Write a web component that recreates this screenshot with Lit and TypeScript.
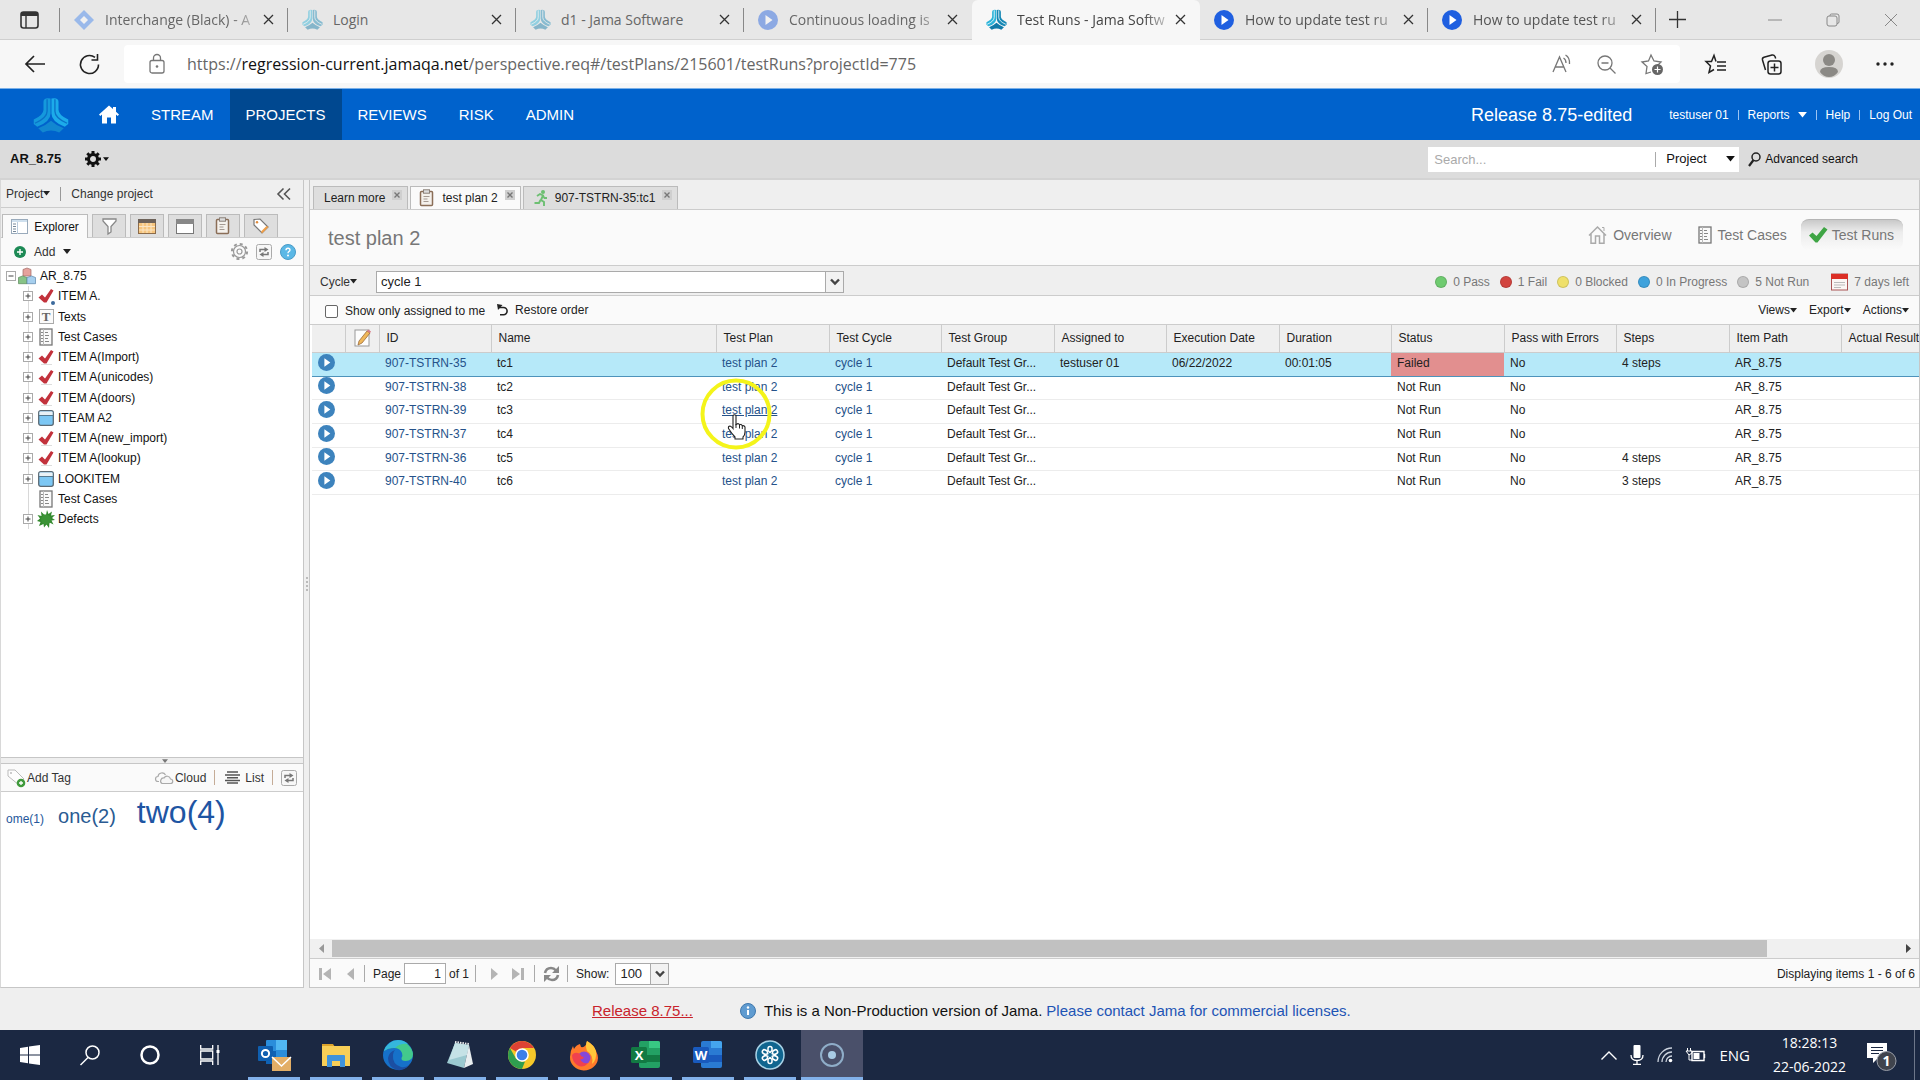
import { LitElement, html, svg, css, nothing, TemplateResult } from "lit";
import { customElement } from "lit/decorators.js";
import { classMap } from "lit/directives/class-map.js";

const base = css`
  * { box-sizing: border-box; }
  button, input, select { font: inherit; color: inherit; margin: 0; padding: 0; border: 0; background: none; border-radius: 0; outline: 0; }
  button { display: inline-flex; align-items: center; white-space: nowrap; cursor: pointer; }
  a { text-decoration: none; color: inherit; }
  select { appearance: none; }
  svg { display: block; flex: none; overflow: visible; }
  .grow { flex: 1; min-width: 0; }
  .row { display: flex; align-items: center; }
`;

const icon = (w: number, h: number, box: string, body: unknown) =>
  html`<svg width=${w} height=${h} viewBox=${box} fill="none" aria-hidden="true">${body}</svg>`;

const caret = (w = 8, color = "#222") =>
  icon(w, w / 2 + 1, "0 0 8 5", svg`<path d="M0 0h8L4 5z" fill=${color}/>`);

const chevron = () =>
  icon(10, 8, "0 0 10 8", svg`<path d="M1 1.5l4 4 4-4" stroke="#444" stroke-width="2.4"/>`);

const jama = (size: number, a: string, b: string, c: string, line: string) =>
  icon(size, size, "0 0 24 24", svg`
    <path d="M11.700 1Q7 .2 7 3.200V8.500Q7 12 .5 15V18L2.800 19.800Q11.700 16.500 11.700 11z" fill=${a}/>
    <path d="M12.300 1Q17 .2 17 3.200V8.500Q17 12 23.500 15V18L21.200 19.800Q12.300 16.500 12.300 11z" fill=${b}/>
    <path d="M3.500 20.800Q8.500 19 12 15.800Q15.500 19 20.500 20.800L17.500 23.700Q12 21 6.500 23.700z" fill=${c}/>
    <path d="M9.400 1.500V9.500Q9.400 14 1.300 17.500M14.600 1.500V9.500Q14.600 14 22.700 17.500" stroke=${line} stroke-width=".9"/>`);

const play = (size: number, color: string) =>
  icon(size, size, "0 0 20 20", svg`<circle cx="10" cy="10" r="10" fill=${color}/><path d="M7.500 5l7 5-7 5z" fill="#fff"/>`);

const clipboard = () => icon(16, 18, "0 0 16 18", svg`
  <rect x="1.500" y="2.500" width="12" height="14" rx="1" fill="#f4f1ec" stroke="#8a6e57" stroke-width="1.500"/>
  <rect x="4.500" y=".8" width="6" height="3.400" fill="#ddd" stroke="#8a8078"/>
  <path d="M4.500 7.500h6M4.500 10h4M4.500 12.500h5" stroke="#a59a93"/>`);

const doc = () => icon(14, 18, "0 0 14 18", svg`
  <rect x="1" y="1" width="12" height="16" fill="#fafafa" stroke="#777" stroke-width="1.300"/>
  <path d="M4.500 1v16" stroke="#bbb"/><path d="M2 4.500h2M2 7.500h2M2 10.500h2M2 13.500h2M6 4.500h3M6 7.500h4M6 10.500h3M6 13.500h4" stroke="#888"/>`);

const refreshBox = () => icon(16, 16, "0 0 16 16", svg`
  <rect x=".5" y=".5" width="15" height="15" rx="2" fill="#f7f7f7" stroke="#aaa"/>
  <path d="M4 8V5.500h5M12 8v2.500H7" stroke="#777" stroke-width="1.500"/><path d="M8.500 3l4 2.500-4 2.500zM7.500 8l-4 2.500 4 2.500z" fill="#777"/>`);

@customElement("browser-bar")
class BrowserBar extends LitElement {
  static styles = [base, css`
    :host { display: block; font: 14px/20px "Open Sans", "Noto Sans", sans-serif; color: #666; }
    .strip { height: 40px; background: #e7e7e7; border-bottom: 1px solid #cfcfcf; }
    .menu { width: 60px; height: 24px; padding-left: 20px; border-right: 1px solid #888; }
    .tab { width: 228px; height: 40px; padding: 0 14px; border-radius: 6px 6px 0 0; position: relative; }
    .tab.sep::after { content: ""; position: absolute; right: 0; top: 8px; height: 24px; width: 1px; background: #888; }
    .tab.active { background: #f7f7f7; color: #444; }
    .tab.live { color: #555; }
    .fav { width: 20px; margin-right: 11px; }
    .dim { opacity: .45; }
    .title { flex: 1; white-space: nowrap; }
    .title.fade { -webkit-mask-image: linear-gradient(90deg, #000 80%, transparent); mask-image: linear-gradient(90deg, #000 80%, transparent); }
    .new { padding-left: 13px; }
    .win { margin-right: 22px; gap: 44px; }
    .bar { height: 48px; background: #f7f7f7; padding: 0 26px 0 24px; }
    .back { width: 55px; } .reload { width: 45px; }
    .url { height: 38px; background: #fff; border-radius: 4px; flex: 1; padding: 0 17px 0 25px; gap: 25px; }
    .url label { display: flex; align-items: center; gap: 22px; flex: 1; font-size: 16px; white-space: nowrap; }
    .host { color: #111; }
    .tools { gap: 35px; margin-left: 25px; }
    .avatar { margin: 0 -2px; }
  `];

  private tab(title: string, fav: TemplateResult, cls: Record<string, boolean>, dim = false) {
    return html`<div class="row tab ${classMap(cls)}">
      <span class="fav ${dim ? "dim" : ""}">${fav}</span><span class="title ${title.length > 19 ? "fade" : ""}">${title}</span>
      <button aria-label="Close ${title}">${icon(11, 11, "0 0 11 11", svg`<path d="M1 1l9 9M10 1l-9 9" stroke="#333" stroke-width="1.300"/>`)}</button>
    </div>`;
  }

  render() {
    const j = () => jama(21, "#2bb3d9", "#1688b5", "#107aa8", "#fff");
    const p = () => play(20, "#1f5fe0");
    const g = "#777", k = "#222";
    return html`
      <div class="row strip">
        <button class="menu" aria-label="Tab actions">${icon(19, 18, "0 0 19 18", svg`<rect x="1" y="1" width="17" height="16" rx="2.500" stroke="#333" stroke-width="1.600"/><path d="M1 3a2 2 0 0 1 2-2h13a2 2 0 0 1 2 2v2H1z" fill="#333"/><path d="M6 5v12" stroke="#333" stroke-width="1.400"/>`)}</button>
        ${this.tab("Interchange (Black) - A", icon(20, 20, "0 0 20 20", svg`<path d="M10 0l10 10-10 10L0 10z" fill="#3f83ee"/><path d="M10 6l4 4-4 4-4-4z" fill="#fff"/>`), { sep: true }, true)}
        ${this.tab("Login", j(), { sep: true }, true)}
        ${this.tab("d1 - Jama Software", j(), { sep: true }, true)}
        ${this.tab("Continuous loading is", p(), {}, true)}
        ${this.tab("Test Runs - Jama Softw", j(), { active: true })}
        ${this.tab("How to update test ru", p(), { sep: true, live: true })}
        ${this.tab("How to update test ru", p(), { sep: true, live: true })}
        <button class="new" aria-label="New tab">${icon(17, 17, "0 0 17 17", svg`<path d="M8.500 0v17M0 8.500h17" stroke="#333" stroke-width="1.300"/>`)}</button>
        <span class="grow"></span>
        <div class="row win">
          <button aria-label="Minimize">${icon(14, 14, "0 0 14 14", svg`<path d="M0 7h14" stroke="#888"/>`)}</button>
          <button aria-label="Restore">${icon(14, 14, "0 0 14 14", svg`<rect x="1" y="3" width="10" height="10" rx="2" stroke="#888"/><path d="M4 3V2.500Q4 1 5.500 1H11q2 0 2 2v6q0 1.500-2 1.500" stroke="#888"/>`)}</button>
          <button aria-label="Close window">${icon(14, 14, "0 0 14 14", svg`<path d="M1 1l12 12M13 1L1 13" stroke="#888"/>`)}</button>
        </div>
      </div>
      <div class="row bar">
        <button class="back" aria-label="Back">${icon(22, 18, "0 0 22 18", svg`<path d="M21 9H2M10 1L2 9l8 8" stroke=${k} stroke-width="1.700"/>`)}</button>
        <button class="reload" aria-label="Reload">${icon(21, 21, "0 0 21 21", svg`<path d="M19.500 10.500a9 9 0 1 1-3.500-7.100M18.500 0v6h-6" stroke=${k} stroke-width="1.600"/>`)}</button>
        <div class="row url">
          <label>${icon(16, 20, "0 0 16 20", svg`<rect x="1" y="6.500" width="14" height="12.500" rx="2" stroke=${g} stroke-width="1.300"/><path d="M4.500 6.500V4a3.500 3.500 0 0 1 7 0v2.500" stroke=${g} stroke-width="1.300"/><circle cx="8" cy="12.500" r="1.300" fill=${g}/>`)}
            <a href="#url">https://<span class="host">regression-current.jamaqa.net</span>/perspective.req#/testPlans/215601/testRuns?projectId=775</a></label>
          <button aria-label="Read aloud">${icon(20, 18, "0 0 20 18", svg`<path d="M1 17L7.500 2 14 17M3.500 12h8M11.500 3q2.500 1.500 2.500 5M13.500 0q4.500 2.500 4 9" stroke=${g} stroke-width="1.300"/>`)}</button>
          <button aria-label="Zoom out">${icon(19, 19, "0 0 19 19", svg`<circle cx="8" cy="8" r="7" stroke=${g} stroke-width="1.300"/><path d="M13 13l5.500 5.500M4.500 8h7" stroke=${g} stroke-width="1.300"/>`)}</button>
          <button aria-label="Add favorite">${icon(22, 21, "0 0 22 21", svg`<path d="M10 18l-5 1.500 1-7L1 8l6.500-1L10 1l3 6 7 1-3 3" stroke=${g} stroke-width="1.300"/><circle cx="16.500" cy="15.500" r="5.500" fill="#666"/><path d="M16.500 12.500v6M13.500 15.500h6" stroke="#fff" stroke-width="1.200"/>`)}</button>
        </div>
        <div class="row tools">
          <button aria-label="Favorites">${icon(21, 20, "0 0 21 20", svg`<path d="M11 7.500L9 1.500l-2.500 6H1l4.500 4.500-1.500 6.500 5-3M12 8h9M12 12h9M12 16h9" stroke=${k} stroke-width="1.500"/>`)}</button>
          <button aria-label="Collections">${icon(21, 21, "0 0 21 21", svg`<rect x="7" y="7" width="13" height="13" rx="2.500" stroke=${k} stroke-width="1.500"/><path d="M13.500 9.500v8M9.500 13.500h8M4.500 16L1.500 6Q1 4 3 3.300L11 1q2-.500 3 1.500l.7 2" stroke=${k} stroke-width="1.500"/>`)}</button>
          <button class="avatar" aria-label="Profile">${icon(28, 28, "0 0 28 28", svg`<circle cx="14" cy="14" r="14" fill="#d6d4d1"/><circle cx="14" cy="10" r="6" fill="#8b8985"/><path d="M5 22q0-5 9-5t9 5q-3.500 5-9 5t-9-5z" fill="#8b8985"/>`)}</button>
          <button aria-label="More">${icon(18, 4, "0 0 18 4", svg`<circle cx="2" cy="2" r="1.700" fill=${k}/><circle cx="9" cy="2" r="1.700" fill=${k}/><circle cx="16" cy="2" r="1.700" fill=${k}/>`)}</button>
        </div>
      </div>`;
  }
}

@customElement("app-header")
class AppHeader extends LitElement {
  static styles = [base, css`
    :host { display: block; font: 12px/16px "Liberation Sans", Arial, sans-serif; }
    .nav { height: 52px; background: #0062cc; color: #fff; border-top: 1px solid #7ab0e8; }
    .logo { margin-left: 33px; }
    .home { margin: 0 16px 0 30px; }
    .item { font-size: 15px; padding: 0 16px; height: 51px; line-height: 51px; }
    .item.on { background: #004890; }
    .rel { font-size: 18px; margin-right: 37px; }
    .user { gap: 9px; margin-right: 8px; }
    .user a { display: flex; align-items: center; gap: 8px; }
    .user i { width: 1px; height: 10px; background: #9cc4f2; }
    .sub { height: 40px; background: #dcdcdc; padding: 0 62px 0 10px; border-bottom: 2px solid #d3d3d3; }
    .name { font-size: 13px; font-weight: bold; margin: 0 24px 0 0; }
    .gear { gap: 2px; }
    .find { height: 25px; width: 311px; background: #fff; padding: 0 4px 0 6px; font-size: 13px; margin-right: 9px; }
    .find input { flex: 1; min-width: 0; height: 25px; }
    .find input::placeholder { color: #aaa; opacity: 1; }
    .find i { width: 1px; height: 15px; background: #aaa; margin-right: 10px; }
    .find select { width: 60px; }
    .adv { display: flex; gap: 4px; align-items: center; }
  `];

  render() {
    return html`
      <nav class="row nav">
        <a class="logo" href="#jama" aria-label="Jama">${jama(36, "#1599dc", "#1cabea", "#1287d0", "#0b72c8")}</a>
        <a class="home" href="#home" aria-label="Home">${icon(20, 19, "0 0 20 19", svg`<path d="M10 .5L0 9.500l1.300 1.400L3 9.500V18.500h5v-6h4v6h5V9.500l1.700 1.400L20 9.500l-3-2.700V2h-3v2z" fill="#fff"/>`)}</a>
        ${["STREAM", "PROJECTS", "REVIEWS", "RISK", "ADMIN"].map(t => html`<a href="#${t}" class="item ${t === "PROJECTS" ? "on" : ""}">${t}</a>`)}
        <span class="grow"></span>
        <span class="rel">Release 8.75-edited</span>
        <div class="row user"><a href="#me">testuser 01</a><i></i><a href="#reports">Reports ${caret(9, "#fff")}</a><i></i><a href="#help">Help</a><i></i><a href="#out">Log Out</a></div>
      </nav>
      <div class="row sub">
        <h1 class="name">AR_8.75</h1>
        <button class="gear" aria-label="Project settings">${icon(16, 16, "0 0 16 16", svg`<circle cx="8" cy="8" r="4.500" stroke="#111" stroke-width="3"/><path d="M8 0v3M8 13v3M0 8h3M13 8h3M2.300 2.300l2.200 2.200M11.500 11.500l2.200 2.200M13.700 2.300l-2.200 2.200M4.500 11.500l-2.200 2.200" stroke="#111" stroke-width="3"/>`)}${caret(6, "#111")}</button>
        <span class="grow"></span>
        <div class="row find"><input type="text" placeholder="Search..." aria-label="Search"><i></i><select aria-label="Search scope"><option>Project</option></select>${caret(9, "#111")}</div>
        <a class="adv" href="#advanced">${icon(13, 15, "0 0 13 15", svg`<circle cx="8" cy="5" r="4" stroke="#222" stroke-width="1.500"/><path d="M5.500 8L1 14" stroke="#222" stroke-width="2.200"/>`)}Advanced search</a>
      </div>`;
  }
}

const treeIcons: Record<string, () => TemplateResult> = {
  check: () => icon(16, 16, "0 0 16 16", svg`<path d="M.5 9.500L4 6.500l3 3L13 1l2.500 1.500L8.500 14.500H6z" fill="#c2323c"/><path d="M3 15.500h11" stroke="#ddd"/>`),
  checkDot: () => icon(16, 16, "0 0 16 16", svg`<path d="M.5 9.500L4 6.500l3 3L13 1l2.500 1.500L8.500 14.500H6z" fill="#c2323c"/><circle cx="15" cy="15" r="2" fill="#3b6a9c"/>`),
  text: () => html`<span class="t">T</span>`,
  doc,
  folder: () => icon(16, 16, "0 0 16 16", svg`<rect x=".700" y=".700" width="14.600" height="14.600" rx="2" fill="#7cc7f4" stroke="#5b6a75" stroke-width="1.300"/><path d="M1.400 5V2.500q0-1 1-1h11.200q1 0 1 1V5z" fill="#e9f1f6"/><path d="M1 5.500h14" stroke="#56798f"/>`),
  bug: () => icon(18, 18, "0 0 18 18", svg`<path d="M9 5l1-5 1.500 4L15 1.500l-1 4 4-.5-3 3 3 2-3.500.5 2 4-4-2L12 18l-2.500-3.500L7 17.500 6.500 14 2 16l1.500-4L0 11l3-2.500L.5 5l4 1L4 1.500 7 4.500z" fill="#338a2e"/><ellipse cx="9" cy="9.500" rx="5" ry="5" fill="#3b9436"/>`),
};

@customElement("explorer-panel")
class ExplorerPanel extends LitElement {
  static styles = [base, css`
    :host { display: flex; flex-direction: column; width: 304px; flex: none; font: 12px/16px "Liberation Sans", Arial, sans-serif; color: #333; background: #efefef; border: 1px solid #c6c6c6; border-top: 0; border-left-color: #d8d8d8; }
    .top { height: 28px; padding: 0 12px 0 5px; border-bottom: 1px solid #ccc; gap: 10px; }
    .top i { width: 1px; height: 14px; background: #999; }
    .tabs { display: flex; gap: 4px; height: 30px; align-items: flex-end; padding-left: 1px; border-bottom: 1px solid #ccc; }
    .tab { width: 34px; height: 23px; justify-content: center; background: #dedede; border: 1px solid #bbb; border-bottom: 0; }
    .tab.on { width: 86px; height: 24px; background: #fafafa; gap: 6px; color: #111; margin: 0 0 -1px; }
    .add { height: 28px; background: #fafafa; border-bottom: 1px solid #ccc; padding: 0 7px 0 13px; gap: 8px; }
    .add button { gap: 8px; }
    .add button.plus { gap: 8px; }
    .tree { list-style: none; margin: 0; padding: 0 0 0 4px; background: #fff; flex: 1; color: #111; }
    li { height: 20px; display: flex; align-items: center; }
    li:nth-child(4n+3) { height: 21px; }
    li.leaf { padding-left: 14px; background: linear-gradient(90deg, transparent 23px, #d8d8d8 23px, #d8d8d8 24px, transparent 24px); }
    .pm { width: 16px; margin-left: 1px; }
    .leaf .pm { margin-left: 4px; width: 15px; }
    .ic { width: 16px; display: flex; justify-content: center; margin-right: 4px; }
    .root .ic { width: 18px; margin-left: -4px; }
    .t { width: 15px; height: 15px; border: 1px solid #aaa; font: bold 13px/13px "Liberation Serif", serif; text-align: center; color: #666; background: #fafafa; }
    .split { height: 7px; border: 1px solid #c6c6c6; border-width: 1px 0; display: flex; justify-content: center; align-items: center; padding-left: 26px; }
    .tagbar { height: 28px; background: #fafafa; border-bottom: 1px solid #ccc; padding: 0 6px; gap: 8px; }
    .tagbar i { width: 1px; height: 15px; background: #c5ac97; }
    .tagbar button { gap: 2px; }
    .tagbar button.list { gap: 5px; margin-left: 2px; }
    .cloud { height: 195px; background: #fff; display: flex; align-items: baseline; padding: 2px 5px; color: #25579b; }
    .c1 { margin-right: 14px; }
    .c2 { font-size: 20px; margin-right: 21px; color: #2a5b92; }
    .c4 { font-size: 32px; line-height: 36px; color: #1e55a3; }
  `];

  private items: [string, string, boolean][] = [
    ["checkDot", "ITEM A.", true], ["text", "Texts", true], ["doc", "Test Cases", true], ["check", "ITEM A(Import)", true],
    ["check", "ITEM A(unicodes)", true], ["check", "ITEM A(doors)", true], ["folder", "ITEAM A2", true],
    ["check", "ITEM A(new_import)", true], ["check", "ITEM A(lookup)", true], ["folder", "LOOKITEM", true],
    ["doc", "Test Cases", false], ["bug", "Defects", true],
  ];

  private box(minus = false) {
    return icon(10, 10, "0 0 10 10", svg`<rect x=".5" y=".5" width="9" height="9" fill="#fff" stroke="#aaa"/><path d="M2.500 5h5" stroke="#444"/>${minus ? nothing : svg`<path d="M5 2.500v5" stroke="#444"/>`}`);
  }

  render() {
    return html`
      <div class="row top"><button>Project${caret(7, "#222")}</button><i></i><button>Change project</button><span class="grow"></span>
        <button aria-label="Collapse">${icon(14, 12, "0 0 14 12", svg`<path d="M6.500.5L1 6l5.500 5.500M13 .5L7.500 6l5.500 5.500" stroke="#555" stroke-width="1.600"/>`)}</button></div>
      <div class="tabs">
        <button class="tab on">${icon(17, 15, "0 0 17 15", svg`<rect x=".5" y=".5" width="16" height="14" fill="#fff" stroke="#9ab"/><path d="M1 1h15v2H1z" fill="#cfe0ee"/><path d="M2 5h3M2 7.500h3M2 10h3M2 12.500h3" stroke="#789"/><path d="M6.500 3v12" stroke="#bcd"/>`)}Explorer</button>
        <button class="tab" aria-label="Filters">${icon(15, 17, "0 0 15 17", svg`<path d="M1 1h13v2L9 8.500V14l-3 2V8.500L1 3z" fill="#fff" stroke="#888" stroke-width="1.300"/>`)}</button>
        <button class="tab" aria-label="Releases">${icon(18, 15, "0 0 18 15", svg`<rect x=".5" y=".5" width="17" height="14" fill="#f6c57e" stroke="#8b6b4a"/><path d="M0 0h18v4H0z" fill="#6d6259"/><path d="M1 7.500h16M1 11h16M5 4v10M9 4v10M13 4v10" stroke="#fbe6c5"/>`)}</button>
        <button class="tab" aria-label="Components">${icon(18, 15, "0 0 18 15", svg`<rect x=".5" y=".5" width="17" height="14" fill="#fff" stroke="#777"/><path d="M0 0h18v5H0z" fill="#888"/>`)}</button>
        <button class="tab" aria-label="Test plans">${clipboard()}</button>
        <button class="tab" aria-label="Tags">${icon(16, 16, "0 0 16 16", svg`<path d="M1 1.500L7 1l8 8-6 6-8-8z" fill="#fff" stroke="#777" stroke-width="1.200"/><path d="M8 13.500L13.500 8l2 1-6.500 6.500z" fill="#f0a04b"/><circle cx="4" cy="4.300" r="1.200" fill="#e08a3a"/>`)}</button>
      </div>
      <div class="row add"><button class="plus">${icon(12, 12, "0 0 12 12", svg`<circle cx="6" cy="6" r="6" fill="#1d8a55"/><path d="M6 3v6M3 6h6" stroke="#fff" stroke-width="1.400"/>`)}Add ${caret(8)}</button><span class="grow"></span>
        <button aria-label="Settings">${icon(17, 17, "0 0 17 17", svg`<circle cx="8.500" cy="8.500" r="6" stroke="#999" stroke-width="1.200"/><circle cx="8.500" cy="8.500" r="2.500" stroke="#999" stroke-width="1.200"/><circle cx="8.500" cy="8.500" r="7.600" stroke="#999" stroke-width="2" stroke-dasharray="3 2.970"/>`)}</button>
        <button aria-label="Refresh">${refreshBox()}</button>
        <button aria-label="Help">${icon(16, 16, "0 0 16 16", svg`<circle cx="8" cy="8" r="7.500" fill="#5bb8e6" stroke="#4a9cc8"/><path d="M6 6.200q0-2 2-2t2 1.800q0 1-1.200 1.600Q8 8 8 9.300" stroke="#fff" stroke-width="1.400"/><circle cx="8" cy="11.500" r="1" fill="#fff"/>`)}</button></div>
      <ul class="tree">
        <li class="root"><span class="pm">${this.box(true)}</span><span class="ic">${icon(18, 17, "0 0 18 17", svg`<path d="M5 1.500L9 0l4 1.500V8H5z" fill="#e5a29c" stroke="#a06a66" stroke-width=".7"/><path d="M.5 9.500L4.500 8 9 9.500v6.200H.5z" fill="#87c386" stroke="#5c8a5b" stroke-width=".7"/><path d="M9 9.500L13.500 8l4 1.500v6.200H9z" fill="#a6cfee" stroke="#5a85aa" stroke-width=".7"/>`)}</span>AR_8.75</li>
        ${this.items.map(([ic, label, kids]) => html`<li class="leaf"><span class="pm">${kids ? this.box() : nothing}</span><span class="ic">${treeIcons[ic]()}</span>${label}</li>`)}
      </ul>
      <div class="split">${caret(6, "#777")}</div>
      <div class="row tagbar">
        <button>${icon(18, 18, "0 0 18 18", svg`<path d="M1 1h7l9 9-5 6L1 7z" fill="#fdfdfd" stroke="#bbb"/><circle cx="4" cy="4" r="1" fill="#bbb"/><circle cx="14" cy="14" r="4.300" fill="#3f9a3b"/><path d="M14 12v4M12 14h4" stroke="#fff" stroke-width="1.300"/>`)}Add Tag</button>
        <span class="grow"></span>
        <button>${icon(18, 12, "0 0 18 12", svg`<path d="M4 9.500H3A2.500 2.500 0 0 1 3 4.500 4 4 0 0 1 10.500 3" stroke="#aaa" stroke-width="1.200"/><path d="M7 11.500h8.500a2.200 2.200 0 0 0 0-4.500A3.500 3.500 0 0 0 9 6a3 3 0 0 0-2 5.500z" fill="#f6f6f6" stroke="#aaa" stroke-width="1.200"/>`)}Cloud</button><i></i>
        <button class="list">${icon(15, 13, "0 0 15 13", svg`<path d="M2 1h11M0 4h15M2 6.700h11M0 9.500h15M2 12h11" stroke="#555" stroke-width="1.500"/>`)}List</button><i></i>
        <button aria-label="Refresh tags">${refreshBox()}</button>
      </div>
      <div class="cloud"><a class="c1" href="#ome">ome(1)</a><a class="c2" href="#one">one(2)</a><a class="c4" href="#two">two(4)</a></div>`;
  }
}

interface Run { id: string; name: string; user?: string; date?: string; dur?: string; status: string; steps?: string; }

@customElement("runs-panel")
class RunsPanel extends LitElement {
  static styles = [base, css`
    :host { display: flex; flex-direction: column; flex: 1; min-width: 0; font: 12px/16px "Liberation Sans", Arial, sans-serif; color: #222; background: #fff; border: 1px solid #c6c6c6; border-top: 0; }
    .tabs { height: 30px; background: #efefef; border-bottom: 1px solid #ccc; align-items: flex-end; padding-left: 3px; gap: 2px; }
    .tab { height: 23px; background: #dedede; border: 1px solid #bbb; border-bottom: 0; padding: 0 5px 0 10px; gap: 7px; }
    .tab.on { background: #fafafa; padding-left: 8px; }
    .tab .x { align-self: flex-start; width: 10px; height: 10px; margin-top: 3px; justify-content: center; background: #cfcfcf; }
    .head { height: 56px; background: #fafafa; border-bottom: 1px solid #ccc; padding: 0 16px 0 18px; }
    h2 { font-size: 20px; line-height: 24px; font-weight: normal; color: #777; margin: 0; }
    .view { font-size: 14px; color: #777; gap: 6px; height: 31px; margin: -6px 0 0 26px; }
    .view.on { margin-left: 14px; padding: 0 9px 0 8px; gap: 4px; border-radius: 8px; background: linear-gradient(#c9c9c9, #ececec 40%, #fafafa); border-top: 1px solid #b5b5b5; }
    .cycle { height: 30px; background: #efefef; border-bottom: 1px solid #ccc; padding: 2px 10px 0; color: #777; }
    .cycle > button { color: #333; width: 56px; }
    .combo { display: flex; height: 22px; background: #fff; border: 1px solid #aaa; font-size: 13px; color: #222; }
    .combo select { flex: 1; min-width: 0; padding-left: 4px; }
    .combo.plan { width: 468px; }
    .combo.size { width: 54px; }
    .combo span { width: 18px; border-left: 1px solid #aaa; background: #f2f2f2; display: flex; align-items: center; justify-content: center; }
    .dot { width: 12px; height: 12px; border-radius: 50%; margin: 0 6px 0 10px; border: 1px solid #0002; }
    .green { background: #6fcb70; } .red { background: #d2443f; } .yellow { background: #efe06a; } .blue { background: #3ea2dc; } .grey { background: #c4c4c4; }
    .days { margin-left: 22px; gap: 6px; }
    .tools { height: 29px; background: #fafafa; border-bottom: 1px solid #ccc; padding: 0 10px 0 15px; gap: 12px; }
    .tools label { display: flex; align-items: center; gap: 6px; padding-top: 2px; }
    .tools input { width: 13px; height: 13px; appearance: none; border: 1px solid #666; border-radius: 2px; background: #fff; margin: 1px 1px 0 0; }
    .tools button.restore { gap: 7px; }
    .scroll { flex: 1; overflow: hidden; padding-left: 2px; }
    table { border-collapse: collapse; table-layout: fixed; width: 1643px; }
    th { height: 27px; background: #efefef; font-weight: normal; text-align: left; padding: 0 0 0 7px; border-right: 1px solid #ccc; border-bottom: 1px solid #ccc; }
    th svg { margin: 0 auto; }
    th.edit { padding: 0; }
    td { height: 24px; padding: 0 6px 2px; white-space: nowrap; overflow: hidden; text-overflow: ellipsis; border-bottom: 1px solid #ececec; }
    tr:nth-child(3n+2) td { height: 23px; }
    td a { color: #25528a; }
    tr.sel td { background: #b6e9f9; border-bottom: 1px solid #4d93bb; }
    tr.sel td.failed { background: #e28f8f; }
    td.go { padding: 0 0 0 6px; }
    td.hover { position: relative; overflow: visible; }
    td.hover a { text-decoration: underline; }
    .ring { position: absolute; left: -16px; top: -22px; z-index: 2; }
    .num { width: 33px; }
    .c112 { width: 112px; } .c113 { width: 113px; } .c225 { width: 225px; } .c34 { width: 34px; }
    .sb { height: 19px; background: #f0f0f0; }
    .sb button { width: 22px; justify-content: center; }
    .sb .track { flex: 1; padding-right: 130px; }
    .sb .thumb { height: 17px; background: #c1c1c1; }
    .pager { height: 29px; background: #fafafa; border-top: 1px solid #ccc; padding: 1px 4px 0 9px; }
    .pager i { width: 1px; height: 17px; background: #aaa; }
    .pager input { width: 42px; height: 21px; border: 1px solid #aaa; background: #fff; text-align: right; padding-right: 4px; margin: 0 3px; }
    .page { display: flex; align-items: center; margin: 0 6px 0 8px; }
    .show { display: flex; align-items: center; gap: 6px; margin-left: 8px; }
    .b1 { width: 27px; } .b2 { width: 18px; } .b3 { padding-left: 11px; width: 36px; } .b4 { width: 22px; } .b5 { margin: 0 7px 0 8px; }
  `];

  private runs: Run[] = [
    { id: "35", name: "tc1", user: "testuser 01", date: "06/22/2022", dur: "00:01:05", status: "Failed", steps: "4 steps" },
    { id: "38", name: "tc2", status: "Not Run" },
    { id: "39", name: "tc3", status: "Not Run" },
    { id: "37", name: "tc4", status: "Not Run" },
    { id: "36", name: "tc5", status: "Not Run", steps: "4 steps" },
    { id: "40", name: "tc6", status: "Not Run", steps: "3 steps" },
  ];

  private tab(label: string, ic: unknown, on = false) {
    return html`<div class="row tab ${on ? "on" : ""}">${ic}<span>${label}</span><button class="x" aria-label="Close ${label}">${icon(6, 6, "0 0 6 6", svg`<path d="M.5.5l5 5M5.500.5l-5 5" stroke="#777" stroke-width="1.400"/>`)}</button></div>`;
  }

  private tri(d: string) { return icon(12, 12, "0 0 12 12", svg`<path d=${d} fill="#b4b4b4"/>`); }

  render() {
    const legend: [string, string][] = [["green", "0 Pass"], ["red", "1 Fail"], ["yellow", "0 Blocked"], ["blue", "0 In Progress"], ["grey", "5 Not Run"]];
    const heads = ["ID", "Name", "Test Plan", "Test Cycle", "Test Group", "Assigned to", "Execution Date", "Duration", "Status", "Pass with Errors", "Steps", "Item Path", "Actual Results"];
    return html`
      <div class="row tabs">
        ${this.tab("Learn more", nothing)}${this.tab("test plan 2", clipboard(), true)}
        ${this.tab("907-TSTRN-35:tc1", icon(14, 16, "0 0 14 16", svg`<circle cx="9" cy="2" r="2" fill="#6dbf72"/><path d="M3 6l3-2 3 1.500L7 10l3 2v4M6.500 10L5 13H.5M9 6l1.500 2H13" stroke="#6dbf72" stroke-width="1.900"/>`))}
      </div>
      <div class="row head"><h2>test plan 2</h2><span class="grow"></span>
        <button class="view">${icon(19, 18, "0 0 19 18", svg`<path d="M1 9.500L9.500 1 18 9.500M3 8v9.300h4.500V10h4v7.300H16V8" stroke="#aaa" stroke-width="1.500"/><path d="M14 1.500h2V5" stroke="#aaa"/>`)}Overview</button>
        <button class="view">${doc()}Test Cases</button>
        <button class="view on">${icon(19, 16, "0 0 19 16", svg`<path d="M0 8.500L3.500 5.500 7.500 9 15 0l3.500 2.500L8.500 15.500h-2z" fill="#3fa545"/>`)}Test Runs</button>
      </div>
      <div class="row cycle"><button>Cycle${caret(7)}</button>
        <div class="combo plan"><select aria-label="Cycle"><option>cycle 1</option></select><span>${chevron()}</span></div><span class="grow"></span>
        ${legend.map(([c, t]) => html`<i class="dot ${c}"></i><span>${t}</span>`)}
        <span class="row days">${icon(17, 18, "0 0 17 18", svg`<rect x=".5" y="1" width="16" height="16" fill="#fbf6f4" stroke="#a55" /><path d="M0 1h17v5H0z" fill="#dc2f26"/><path d="M3 9.500h11M3 12h11M3 14.500h7" stroke="#bbb"/>`)}7 days left</span>
      </div>
      <div class="row tools"><label><input type="checkbox">Show only assigned to me</label>
        <button class="restore">${icon(11, 12, "0 0 11 12", svg`<path d="M1.500 3.500h5a3.600 3.600 0 1 1 0 7.200H3" stroke="#222" stroke-width="1.600"/><path d="M0 0l5.500 1L1 6z" fill="#222"/>`)}Restore order</button>
        <span class="grow"></span>
        ${["Views", "Export", "Actions"].map(t => html`<button>${t}${caret(7)}</button>`)}
      </div>
      <div class="scroll"><table>
        <colgroup><col class="num"><col class="c34"><col class="c112"><col class="c225">${[113, 112, 113, 112, 113, 112, 113, 112, 113, 112].map(w => html`<col class="c${w}">`)}</colgroup>
        <thead><tr><th></th><th class="edit">${icon(17, 18, "0 0 17 18", svg`<rect x="1" y="1" width="14" height="16" fill="#fdfdfd" stroke="#999"/><path d="M5 12l8-10 3 2-8 10-4 2z" fill="#f0b85a" stroke="#9a6a3a" stroke-width=".8"/><path d="M13 2l1-1.500 3 2L16 4z" fill="#d87a86"/>`)}</th>${heads.map(h => html`<th>${h}</th>`)}</tr></thead>
        <tbody>${this.runs.map((r, i) => html`<tr class=${i === 0 ? "sel" : ""}>
          <td class="go"><button aria-label="Run ${r.name}">${play(17, "#3d83bd")}</button></td><td></td>
          <td><a href="#run${r.id}">907-TSTRN-${r.id}</a></td><td>${r.name}</td>
          <td class=${i === 2 ? "hover" : ""}><a href="#plan">test plan 2</a>${i === 2 ? this.pointer() : nothing}</td>
          <td><a href="#cycle">cycle 1</a></td><td>Default Test Gr...</td><td>${r.user}</td><td>${r.date}</td><td>${r.dur}</td>
          <td class=${i === 0 ? "failed" : ""}>${r.status}</td><td>No</td><td>${r.steps}</td><td>AR_8.75</td><td></td></tr>`)}</tbody>
      </table></div>
      <div class="row sb"><button aria-label="Scroll left">${icon(5, 9, "0 0 5 9", svg`<path d="M5 0v9L0 4.500z" fill="#999"/>`)}</button><div class="track"><div class="thumb"></div></div><button aria-label="Scroll right">${icon(5, 9, "0 0 5 9", svg`<path d="M0 0v9l5-4.500z" fill="#444"/>`)}</button></div>
      <div class="row pager">
        <button class="b1" aria-label="First page">${this.tri("M0 0h3v12H0zM12 0v12L4 6z")}</button><button class="b2" aria-label="Previous page">${this.tri("M8 0v12L1 6z")}</button><i></i>
        <label class="page">Page<input type="text" value="1">of 1</label><i></i>
        <button class="b3" aria-label="Next page">${this.tri("M4 0v12l7-6z")}</button><button class="b4" aria-label="Last page">${this.tri("M0 0v12l8-6zM9 0h3v12H9z")}</button><i></i>
        <button class="b5" aria-label="Reload">${icon(17, 16, "0 0 17 16", svg`<path d="M2 7q1-5 6-5 3 0 5 2.500M15 9q-1 5-6 5-3 0-5-2.500" stroke="#888" stroke-width="2.600"/><path d="M16 0v7H9zM1 16V9h7z" fill="#888"/>`)}</button><i></i>
        <label class="show">Show:<div class="combo size"><select><option>100</option></select><span>${chevron()}</span></div></label>
        <span class="grow"></span><span>Displaying items 1 - 6 of 6</span>
      </div>`;
  }

  private pointer() {
    return html`<span class="ring">${icon(72, 72, "0 0 72 72", svg`<circle cx="36" cy="36" r="33.500" stroke="#f4f41a" stroke-width="4"/>
      <path d="M33 37.500q1.500-1.500 3 0v9l1-.5q1.500-1 2.500.8 1.800-.8 2.800.9 2-.5 2.700 1.300V54q0 3-2 5v2h-8v-2q-3-3-6.500-8.500-.5-2.500 1.500-2.500 1.500.5 3 2.500z" fill="#fff" stroke="#222" stroke-width="1.100"/><path d="M36 46v4M39.500 47v3.500M42.300 48v3" stroke="#222"/>`)}</span>`;
  }
}

@customElement("task-bar")
class TaskBar extends LitElement {
  static styles = [base, css`
    :host { display: flex; height: 50px; background: #1b2842; color: #fff; font: 15px/24px "Open Sans", "Noto Sans", sans-serif; }
    .sys { width: 60px; justify-content: center; }
    .apps { display: flex; margin-left: 3px; }
    .app { width: 62px; height: 50px; justify-content: center; border: solid transparent; border-width: 0 5px; background: linear-gradient(#82b1ea, #82b1ea) bottom / 100% 3px no-repeat; background-clip: padding-box; }
    .app.on { border: 0; background: linear-gradient(#82b1ea, #82b1ea) bottom / 100% 3px no-repeat #4a506a; }
    .tray { display: flex; align-items: center; font-size: 15px; }
    .tray button { margin-right: 13px; }
    .clock { text-align: center; font-size: 14px; margin: 0 20px 0 23px; }
    .clock div { height: 24px; }
    .note { border-right: 1px solid #6d7689; height: 50px; padding-right: 16px; margin-right: 5px; display: flex; align-items: center; }
  `];

  render() {
    const office = (l: string, a: string, b: string, c: string) => icon(30, 28, "0 0 30 28", svg`
      <rect x="8" y="0" width="21" height="27" rx="2" fill=${b}/><path d="M18 0h9q2 0 2 2v5H18z" fill=${c}/><path d="M8 14h21v7H8z" fill=${a}/><rect x="0" y="6" width="16" height="16" rx="1.500" fill=${a}/>
      <text x="8" y="18.500" text-anchor="middle" font-size="13" font-weight="bold" font-family="Open Sans, sans-serif" fill="#fff">${l}</text>`);
    const apps: [string, TemplateResult][] = [
      ["Outlook", icon(32, 32, "0 0 32 32", svg`<rect x="8" y="1" width="21" height="24" rx="1" fill="#2a8ddb"/><path d="M18 1h11v10H18z" fill="#51b7f2"/><path d="M8 12h10v13H8z" fill="#0f62b4"/><rect x="0" y="7" width="15" height="15" rx="1" fill="#0f5fb0"/><circle cx="7.500" cy="14.500" r="3.600" stroke="#fff" stroke-width="2"/><rect x="14" y="18" width="19" height="14" fill="#e3ae66"/><path d="M14 18l9.500 9 9.500-9" stroke="#fff" stroke-width="1.500"/>`)],
      ["File Explorer", icon(28, 24, "0 0 28 24", svg`<path d="M0 1h11l2 3H0z" fill="#dca32b"/><rect x="0" y="3" width="28" height="20" fill="#f8cf57"/><path d="M5 24V13q0-1 1-1h16q1 0 1 1v11h-5v-6h-8v6z" fill="#3f93dc"/>`)],
      ["Edge", icon(30, 30, "0 0 30 30", svg`<circle cx="15" cy="15" r="15" fill="#1671c9"/><path d="M1 11A15 15 0 0 1 30 14q0 7-7.500 7-4.500 0-4-3 1.500-2 .5-5-2-5-8-5Q5 8 1 11z" fill="#43c98c"/><path d="M1 11A15 15 0 0 1 15 0q6 0 10 4-8-1-13 4-6-1-11 3z" fill="#35b7dd"/><path d="M10 15q-1 9 8 12 4 1 8-2-4 6-12 5Q5 27 5 18q1-6 7-8-2 2-2 5z" fill="#1b4fa3"/>`)],
      ["Notepad", icon(28, 28, "0 0 28 28", svg`<path d="M9 2l14 2-5 23-17-5z" fill="#9bc9d0"/><path d="M9 2l14 2-2 10L3 19z" fill="#c5e2e6"/><path d="M23 4l4 19-9 4z" fill="#e9eef0"/><path d="M9 1l14 2" stroke="#eee" stroke-width="2" stroke-dasharray="1.500 1"/>`)],
      ["Chrome", icon(28, 28, "0 0 28 28", svg`<circle cx="14" cy="14" r="14" fill="#f6c829"/><path d="M14 14L1.900 7A14 14 0 0 1 26.100 7H14z" fill="#dd4234"/><path d="M14 28A14 14 0 0 1 1.900 7l6 10.500L14 21l3-.5z" fill="#2f9e4f"/><circle cx="14" cy="14" r="6.800" fill="#fff"/><circle cx="14" cy="14" r="5.300" fill="#3d7fe8"/>`)],
      ["Firefox", icon(28, 29, "0 0 28 29", svg`<path d="M17 0q7 4 9 10 2 4 2 7a14 13 0 0 1-28-1q0-6 3-11l1 3q2-4 6-5l1 3q5 1 6-6z" fill="#ff7a2b"/><path d="M17 0q7 4 9 10 1 9-4 13 2-9-5-13-2-6 0-10z" fill="#ffc83a"/><circle cx="14" cy="17" r="6.500" fill="#8648d8"/><path d="M2 14q3-4 8-1 1 3 4 3-1 3-4 2 2 5 8 4-5 6-11 2-5-4-5-10z" fill="#f0414f"/>`)],
      ["Excel", office("X", "#127a43", "#23a164", "#38c883")],
      ["Word", office("W", "#195abd", "#2a7bd3", "#45a5ee")],
      ["Teamwork", icon(30, 30, "0 0 30 30", svg`<circle cx="15" cy="15" r="14" fill="#10658f" stroke="#a8d2e6" stroke-width="1.500"/><g stroke="#fff" stroke-width="1.500" stroke-linejoin="round">${[0, 60, 120, 180, 240, 300].map(a => svg`<path transform="rotate(${a} 15 15)" d="M15 12.500L13 10.500V8.500a2 2 0 0 1 4 0v2z"/>`)}</g>`)],
      ["Recorder", icon(24, 24, "0 0 24 24", svg`<circle cx="12" cy="12" r="11" stroke="#8fadc8" stroke-width="2"/><circle cx="12" cy="12" r="4" fill="#a8cbe4"/>`)],
    ];
    return html`
      <button class="sys" aria-label="Start">${icon(20, 20, "0 0 20 20", svg`<path d="M0 3l8-1.200V9.500H0zM9 1.600L20 0v9.500H9zM0 10.500h8v7.700L0 17zM9 10.500h11V20L9 18.400z" fill="#fff"/>`)}</button>
      <button class="sys" aria-label="Search">${icon(20, 20, "0 0 20 20", svg`<circle cx="12.500" cy="7.500" r="6.500" stroke="#fff" stroke-width="1.500"/><path d="M8 12.500L.5 20" stroke="#fff" stroke-width="1.500"/>`)}</button>
      <button class="sys" aria-label="Cortana">${icon(20, 20, "0 0 20 20", svg`<circle cx="10" cy="10" r="8.500" stroke="#fff" stroke-width="2.500"/>`)}</button>
      <button class="sys" aria-label="Task view">${icon(21, 20, "0 0 21 20", svg`<path d="M.7 0v4h12V0M.7 20v-4h12v4M.7 6h12v8H.7zM18 0v20" stroke="#fff" stroke-width="1.300"/><path d="M16.500 5h3v3h-3z" fill="#fff"/>`)}</button>
      <div class="apps">${apps.map(([n, ic]) => html`<button class="app ${n === "Recorder" ? "on" : ""}" aria-label=${n}>${ic}</button>`)}</div>
      <span class="grow"></span>
      <div class="tray">
        <button aria-label="Hidden icons">${icon(16, 9, "0 0 16 9", svg`<path d="M.5 8.500L8 1l7.500 7.500" stroke="#fff" stroke-width="1.400"/>`)}</button>
        <button aria-label="Microphone">${icon(14, 20, "0 0 14 20", svg`<rect x="3.500" y="0" width="7" height="13" rx="1" fill="#fff"/><path d="M1 10q0 5.500 6 5.500T13 10M7 15v4M3 19.300h8" stroke="#fff" stroke-width="1.300"/>`)}</button>
        <button aria-label="Network">${icon(16, 16, "0 0 16 16", svg`<path d="M1 15A14 14 0 0 1 15 1M5 15A10 10 0 0 1 15 5M9 15a6 6 0 0 1 6-6" stroke="#ccd3de" stroke-width="1.300"/><circle cx="13.500" cy="13.500" r="1.800" fill="#fff"/>`)}</button>
        <button aria-label="Battery">${icon(20, 14, "0 0 20 14", svg`<path d="M6 3.500h12v9H6zM18.500 6v4" stroke="#fff" stroke-width="1.400"/><path d="M7.500 5h6v6h-6z" fill="#fff"/><path d="M1.500 0v3M4.500 0v3M0 3h6v2L3 7zM3 6v6h3" stroke="#fff"/>`)}</button>
        <span>ENG</span>
        <div class="clock"><div>18:28:13</div><div>22-06-2022</div></div>
        <div class="note">${icon(32, 32, "0 0 32 32", svg`<path d="M1 4h20v15H12l-5 5v-5H1z" fill="#fff"/><path d="M5 8.500h12M5 11.500h12M5 14.500h8" stroke="#1b2842"/><circle cx="20.500" cy="22" r="9.500" fill="#40444d" stroke="#9a9fa9"/><text x="20.500" y="27" text-anchor="middle" font-size="14" font-family="Open Sans, sans-serif" font-weight="bold" fill="#fff">1</text>`)}</div>
      </div>`;
  }
}

@customElement("app-root")
class AppRoot extends LitElement {
  static styles = [base, css`
    :host { display: flex; flex-direction: column; min-height: 100vh; background: #efefef; font: 15px/20px "Liberation Sans", Arial, sans-serif; color: #111; }
    main { display: flex; flex: 1; }
    .bar { width: 5px; display: flex; align-items: center; justify-content: center; }
    .bar i { width: 2px; height: 14px; background: repeating-linear-gradient(#bbb 0 2px, transparent 2px 4px); }
    footer { height: 42px; display: flex; align-items: center; padding: 4px 0 0 592px; }
    .rel { color: #c8232c; text-decoration: underline; margin-right: 47px; }
    .lic { color: #1d54b5; margin-left: 4px; }
    footer svg { margin-right: 8px; }
  `];

  render() {
    return html`
      <browser-bar></browser-bar>
      <app-header></app-header>
      <main><explorer-panel></explorer-panel><div class="bar"><i></i></div><runs-panel></runs-panel></main>
      <footer><a class="rel" href="#release">Release 8.75...</a>
        ${icon(16, 16, "0 0 16 16", svg`<circle cx="8" cy="8" r="7.500" fill="#5f9bd0" stroke="#3f78ad"/><path d="M8 7v5" stroke="#fff" stroke-width="2"/><circle cx="8" cy="4.500" r="1.200" fill="#fff"/>`)}
        <span>This is a Non-Production version of Jama.</span><a class="lic" href="#contact">Please contact Jama for commercial licenses.</a></footer>
      <task-bar></task-bar>`;
  }
}
